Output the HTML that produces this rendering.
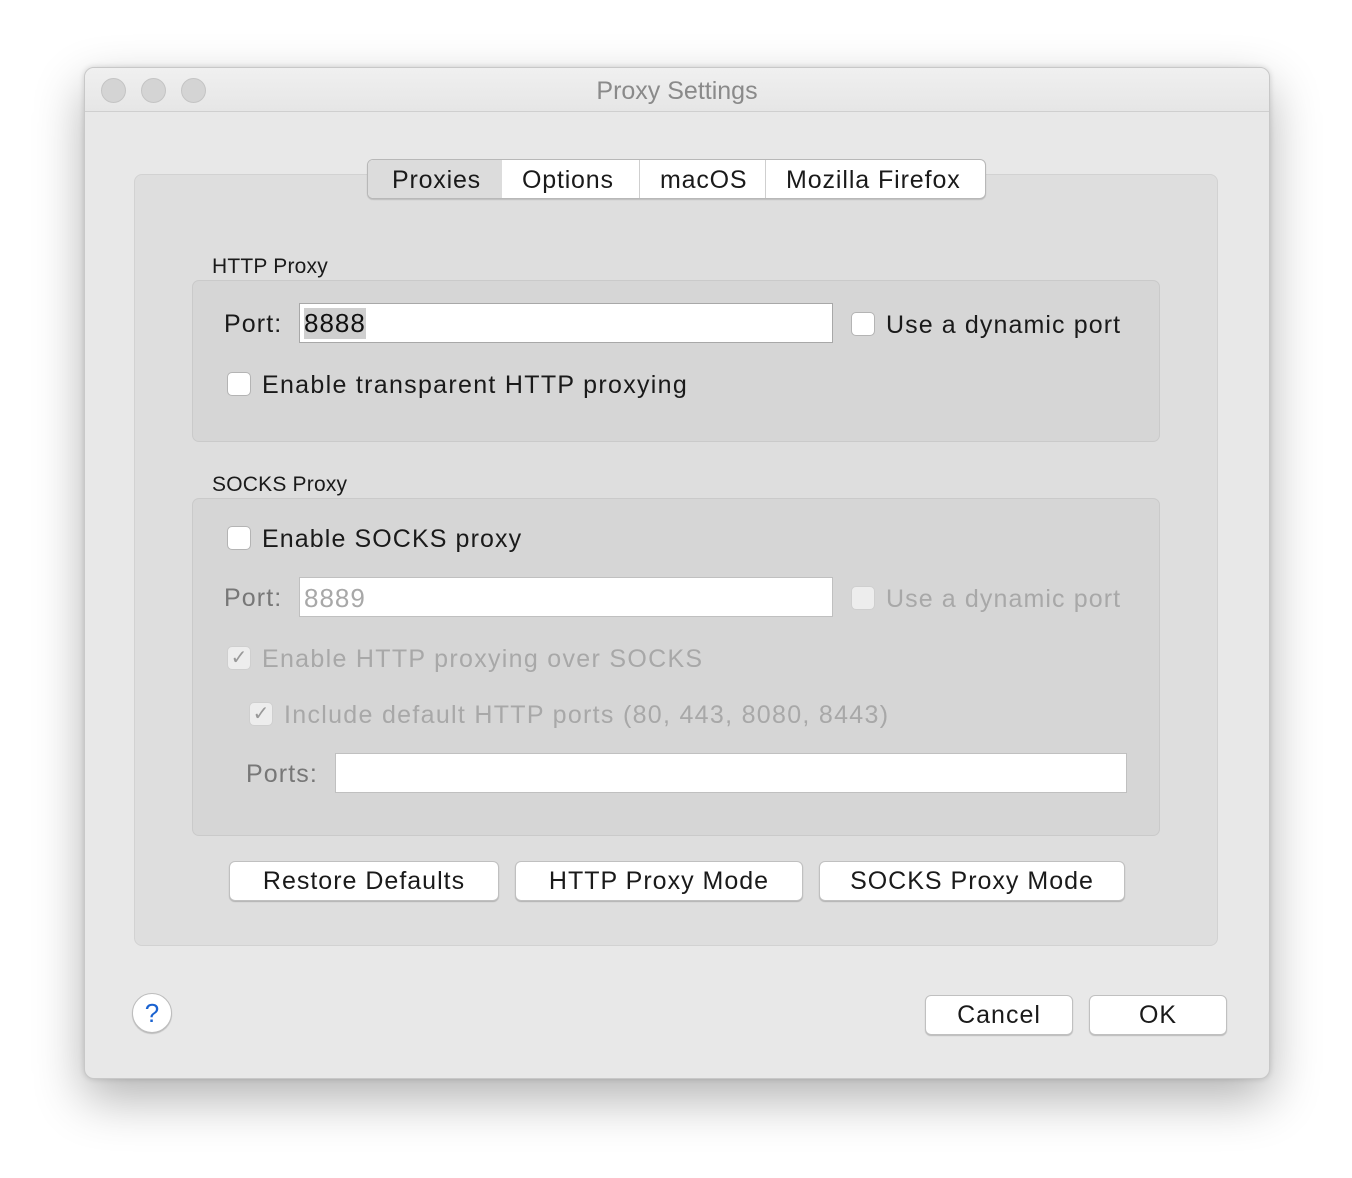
<!DOCTYPE html><html><head><style>
body{margin:0;width:1352px;height:1178px;background:#fff;font-family:"Liberation Sans",sans-serif;position:relative;overflow:hidden}
.a{position:absolute}
.win{left:84px;top:67px;width:1184px;height:1010px;background:#e8e8e8;border:1px solid #c8c8c8;border-radius:10px;box-shadow:0 20px 50px rgba(0,0,0,.3),0 0 6px rgba(0,0,0,.15);overflow:hidden}
.title{left:0;top:0;width:1184px;height:43px;background:linear-gradient(#f0f0f0,#e6e6e6);border-bottom:1px solid #cfcfcf;text-align:center;line-height:46px;font-size:25px;color:#8a8a8a}
.dot{width:23px;height:23px;border-radius:50%;background:#d4d4d4;border:1px solid #c4c4c4;top:10px}
.t{font-size:25px;color:#1a1a1a;white-space:nowrap;letter-spacing:1.1px}
.g{color:#a8a8a8}
.cb{width:24px;height:24px;background:#fff;border:1px solid #b4b4b4;border-radius:5px;box-sizing:border-box;letter-spacing:0}
.cb.d{background:#ededed;border-color:#cfcfcf}
.inp{background:#fff;border:1px solid #a8a8a8;box-sizing:border-box}
.btn{background:#fff;border:1px solid #c0c0c0;border-radius:6px;box-shadow:0 1px 1px rgba(0,0,0,.2);box-sizing:border-box;text-align:center;font-size:25px;color:#1a1a1a;line-height:39px;letter-spacing:1px}
.grp{background:#d6d6d6;border:1px solid #cacaca;border-radius:7px;box-sizing:border-box}
</style></head><body>
<div class="a win">
<div class="a title">Proxy Settings</div>
<div class="a dot" style="left:16px"></div><div class="a dot" style="left:56px"></div><div class="a dot" style="left:96px"></div>
</div>
<div class="a" style="left:134px;top:174px;width:1084px;height:772px;background:#dedede;border:1px solid #d2d2d2;border-radius:8px;box-sizing:border-box"></div>
<div class="a" style="left:367px;top:159px;width:619px;height:40px;background:#fff;border:1px solid #b8b8b8;border-radius:6px;box-sizing:border-box;box-shadow:0 1px 1px rgba(0,0,0,.15);overflow:hidden">
<div class="a" style="left:0;top:0;width:134px;height:40px;background:#dcdcdc"></div>
<div class="a" style="left:271px;top:0;width:1px;height:40px;background:#cfcfcf"></div>
<div class="a" style="left:397px;top:0;width:1px;height:40px;background:#cfcfcf"></div>
<div class="a t" style="left:24px;top:6px;letter-spacing:0.8px">Proxies</div>
<div class="a t" style="left:154px;top:6px;letter-spacing:0.8px">Options</div>
<div class="a t" style="left:292px;top:6px;letter-spacing:0.8px">macOS</div>
<div class="a t" style="left:418px;top:6px;letter-spacing:0.9px">Mozilla Firefox</div>
</div>
<div class="a t" style="left:212px;top:255px;font-size:21px;letter-spacing:0.2px">HTTP Proxy</div>
<div class="a grp" style="left:192px;top:280px;width:968px;height:162px"></div>
<div class="a t" style="left:224px;top:310px">Port:</div>
<div class="a inp" style="left:299px;top:303px;width:534px;height:40px"><span class="a" style="left:4px;top:4px;background:#cfcfcf;font-size:26px;line-height:31px;color:#111;letter-spacing:1px">8888</span></div>
<div class="a cb" style="left:851px;top:312px"></div><div class="a t" style="left:886px;top:311px">Use a dynamic port</div>
<div class="a cb" style="left:227px;top:372px"></div><div class="a t" style="left:262px;top:371px;letter-spacing:1.3px">Enable transparent HTTP proxying</div>
<div class="a t" style="left:212px;top:473px;font-size:21px;letter-spacing:0.2px">SOCKS Proxy</div>
<div class="a grp" style="left:192px;top:498px;width:968px;height:338px"></div>
<div class="a cb" style="left:227px;top:526px"></div><div class="a t" style="left:262px;top:525px">Enable SOCKS proxy</div>
<div class="a t" style="left:224px;top:584px;color:#777">Port:</div>
<div class="a inp" style="left:299px;top:577px;width:534px;height:40px;border-color:#c0c0c0"><span class="a g" style="left:4px;top:5px;font-size:26px;line-height:30px;letter-spacing:1px">8889</span></div>
<div class="a cb d" style="left:851px;top:586px"></div><div class="a t g" style="left:886px;top:585px">Use a dynamic port</div>
<div class="a cb d" style="left:227px;top:646px;font-size:20px;color:#999;text-align:center;line-height:22px">✓</div><div class="a t g" style="left:262px;top:645px;letter-spacing:1.3px">Enable HTTP proxying over SOCKS</div>
<div class="a cb d" style="left:249px;top:702px;font-size:20px;color:#999;text-align:center;line-height:22px">✓</div><div class="a t g" style="left:284px;top:701px;letter-spacing:1.3px">Include default HTTP ports (80, 443, 8080, 8443)</div>
<div class="a t" style="left:246px;top:760px;color:#777">Ports:</div>
<div class="a inp" style="left:335px;top:753px;width:792px;height:40px;border-color:#c0c0c0"></div>
<div class="a btn" style="left:229px;top:861px;width:270px;height:40px">Restore Defaults</div>
<div class="a btn" style="left:515px;top:861px;width:288px;height:40px">HTTP Proxy Mode</div>
<div class="a btn" style="left:819px;top:861px;width:306px;height:40px">SOCKS Proxy Mode</div>
<div class="a" style="left:132px;top:993px;width:38px;height:38px;border-radius:50%;background:#fff;border:1px solid #bdbdbd;box-shadow:0 1px 1px rgba(0,0,0,.2);text-align:center;line-height:38px;font-size:26px;color:#1a62d0">?</div>
<div class="a btn" style="left:925px;top:995px;width:148px;height:40px">Cancel</div>
<div class="a btn" style="left:1089px;top:995px;width:138px;height:40px">OK</div>
</body></html>
